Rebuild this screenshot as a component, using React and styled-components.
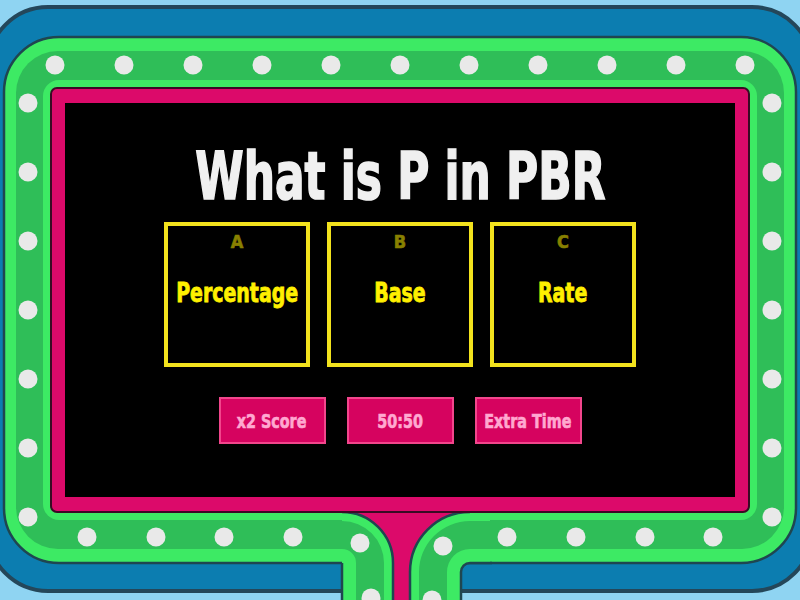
import React from "react";
import styled, { createGlobalStyle } from "styled-components";

const Global = createGlobalStyle`
  html, body { margin: 0; padding: 0; background: #8fd4f2; }
  * { box-sizing: border-box; }
`;

const FONT = `"DejaVu Sans Condensed", "DejaVu Sans", sans-serif`;

const Stage = styled.main`
  position: relative;
  width: 800px;
  height: 600px;
  overflow: hidden;
  padding: 89px 52px 0;
  background: #8fd4f2;
  font-family: ${FONT};
`;

const Backdrop = styled.svg`
  position: absolute;
  left: 0;
  top: 0;
`;

const Panel = styled.section`
  position: relative;
  width: 696px;
  height: 422px;
  border-style: solid;
  border-color: #dc0a6a;
  border-width: 14px 13px;
  border-radius: 5px;
  background: #000;
  box-shadow: 0 0 0 2px #3a0b24;
  display: flex;
  flex-direction: column;
  align-items: center;
  padding-top: 41px;
`;

const Title = styled.h1`
  margin: 0;
  font-size: 65px;
  line-height: 1;
  font-weight: 700;
  color: #f0f0f0;
  -webkit-text-stroke: 1.6px #f0f0f0;
  white-space: nowrap;
`;

const Squeeze = styled.span`
  display: inline-block;
  white-space: nowrap;
  transform: scaleX(${(p) => p.$sx});
`;

const Answers = styled.div`
  display: flex;
  gap: 17px;
  margin-top: 13px;
`;

const Card = styled.div`
  width: 146px;
  height: 145px;
  border: 4px solid #f2e21d;
  display: flex;
  flex-direction: column;
  align-items: center;
  padding-top: 7px;
`;

const Letter = styled.span`
  font-size: 18px;
  line-height: 1;
  font-weight: 700;
  color: #888000;
  -webkit-text-stroke: 0.6px #888000;
`;

const AnswerText = styled.span`
  margin-top: 28px;
  font-size: 27px;
  line-height: 1;
  font-weight: 700;
  color: #fff000;
  -webkit-text-stroke: 0.8px #fff000;
  white-space: nowrap;
`;

const Powerups = styled.div`
  display: flex;
  gap: 21px;
  margin-top: 30px;
`;

const Powerup = styled.button`
  width: 107px;
  height: 47px;
  border: 2px solid #f2468c;
  background: #d6035f;
  color: #ffa8d0;
  -webkit-text-stroke: 0.6px #ffa8d0;
  font-family: ${FONT};
  font-weight: 700;
  font-size: 19px;
  padding: 0;
  display: flex;
  align-items: center;
  justify-content: center;
  white-space: nowrap;
`;

const BRIGHT = "#3dea64";
const DARK = "#2fbe58";
const LINE = "#1f4650";
const PINK = "#dc0a6a";

const dots = [];
for (let k = 0; k <= 10; k++) dots.push([55 + 69 * k, 65]);
for (let k = 0; k <= 6; k++) {
  dots.push([28, 103 + 69 * k]);
  dots.push([772, 103 + 69 * k]);
}
[87, 156, 224, 293, 507, 576, 645, 713].forEach((x) => dots.push([x, 537]));
dots.push([360, 543], [371, 598], [443, 546], [432, 600]);

function Frame() {
  return (
    <Backdrop width="800" height="600" viewBox="0 0 800 600" aria-hidden="true">
      <rect x="-12" y="7" width="824" height="584" rx="60" fill="#0c7db0" stroke="#24475a" strokeWidth="4" />
      <rect x="4" y="37" width="792" height="526" rx="55" fill={BRIGHT} stroke={LINE} strokeWidth="2.5" />
      <rect x="16" y="51" width="768" height="498" rx="42" fill={DARK} />
      <rect x="43" y="80" width="714" height="440" rx="16" fill={BRIGHT} />
      <path d="M342 505 H470 V560 H460 V600 H342 Z" fill={PINK} />
      <path d="M342 512 A51 51 0 0 1 393 563 V600 H342 Z" fill={BRIGHT} />
      <path d="M342 521 A42 42 0 0 1 384 563 V600 H356 V563 A14 14 0 0 0 342 549 Z" fill={DARK} />
      <path d="M342 512 A51 51 0 0 1 393 563 V600 M342 563 V600" fill="none" stroke={LINE} strokeWidth="2.5" />
      <path d="M410 600 V572 A60 60 0 0 1 470 512 H490 V563 H470 A9 9 0 0 0 461 572 V600 Z" fill={BRIGHT} />
      <path d="M419 600 V572 A51 51 0 0 1 470 521 H490 V549 H470 A23 23 0 0 0 447 572 V600 Z" fill={DARK} />
      <path d="M410 600 V572 A60 60 0 0 1 470 512 M461 600 V572 A9 9 0 0 1 470 563 H492" fill="none" stroke={LINE} strokeWidth="2.5" />
      {dots.map(([cx, cy], i) => (
        <circle key={i} cx={cx} cy={cy} r="9.5" fill="#e9e9e9" />
      ))}
    </Backdrop>
  );
}

const answers = [
  { key: "A", text: "Percentage" },
  { key: "B", text: "Base" },
  { key: "C", text: "Rate" },
];

const powerups = ["x2 Score", "50:50", "Extra Time"];

export default function App() {
  return (
    <>
      <Global />
      <Stage>
        <Frame />
        <Panel>
          <Title>
            <Squeeze $sx={0.75}>What is P in PBR</Squeeze>
          </Title>
          <Answers>
            {answers.map((a) => (
              <Card key={a.key}>
                <Letter>{a.key}</Letter>
                <AnswerText>
                  <Squeeze $sx={0.78}>{a.text}</Squeeze>
                </AnswerText>
              </Card>
            ))}
          </Answers>
          <Powerups>
            {powerups.map((p) => (
              <Powerup key={p}>
                <Squeeze $sx={0.84}>{p}</Squeeze>
              </Powerup>
            ))}
          </Powerups>
        </Panel>
      </Stage>
    </>
  );
}
